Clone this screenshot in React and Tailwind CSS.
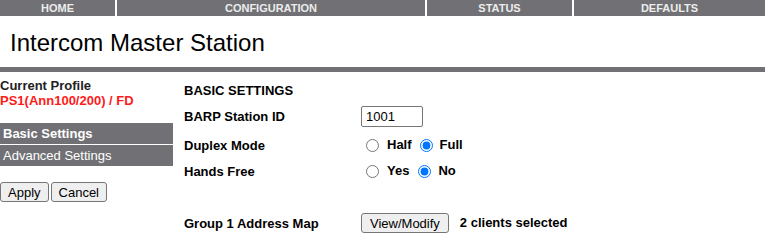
import React, { useState } from 'react';

const navItems = [
  { label: 'HOME', width: 'w-[115px]' },
  { label: 'CONFIGURATION', width: 'w-[308px]' },
  { label: 'STATUS', width: 'w-[145px]' },
  { label: 'DEFAULTS', width: 'flex-1' },
];

const App = () => {
  const [duplex, setDuplex] = useState('full');
  const [handsFree, setHandsFree] = useState('no');
  const [stationId, setStationId] = useState('1001');

  return (
    <div className="w-[765px] h-[246px] bg-white overflow-hidden font-['Liberation_Sans',Arial,sans-serif] text-black">
      {/* top navigation */}
      <div className="flex h-[16px] bg-white gap-[2px]">
        {navItems.map(item => (
          <div
            key={item.label}
            className={`${item.width} h-full flex items-center justify-center text-[11px] font-bold text-[#ececec] bg-[#717175] leading-none`}
          >
            {item.label}
          </div>
        ))}
      </div>

      {/* title */}
      <div className="h-[51px] flex items-center pl-[10px] pt-[2px]">
        <h1 className="text-[24px] leading-none">Intercom Master Station</h1>
      </div>
      <div className="h-[5px] bg-[#717175]" />

      <div className="flex">
        {/* sidebar */}
        <div className="w-[173px] pt-[6px]">
          <div className="text-[13px] font-bold leading-[15px] text-[#222]">Current Profile</div>
          <div className="text-[13px] font-bold leading-[15px] text-[#ff1a1a]">PS1(Ann100/200) / FD</div>

          <div className="mt-[15px] flex flex-col gap-px">
            <div className="h-[21px] bg-[#717175] text-white text-[13px] font-bold flex items-center pl-[3px]">
              Basic Settings
            </div>
            <div className="h-[21px] bg-[#717175] text-white text-[13px] flex items-center pl-[3px]">
              Advanced Settings
            </div>
          </div>

          <div className="mt-[16px] flex gap-[2px]">
            <button className="h-[20px] px-[7px] text-[13px] bg-[#efefef] border border-[#767676] rounded-[3px] leading-none">
              Apply
            </button>
            <button className="h-[20px] px-[7px] text-[13px] bg-[#efefef] border border-[#767676] rounded-[3px] leading-none">
              Cancel
            </button>
          </div>
        </div>

        {/* main content */}
        <div className="pl-[11px] pt-[11px] text-[13px] font-bold">
          <div className="leading-[15px]">BASIC SETTINGS</div>

          <div className="grid grid-cols-[177px_auto] mt-[8px] items-center">
            <div className="leading-[15px]">BARP Station ID</div>
            <input
              type="text"
              value={stationId}
              onChange={e => setStationId(e.target.value)}
              className="w-[62px] h-[21px] border border-[#767676] rounded-[2px] px-[4px] text-[13px] font-normal outline-none"
            />

            <div className="leading-[15px] mt-[8px]">Duplex Mode</div>
            <div className="flex items-center mt-[8px] h-[20px]">
              <input
                type="radio"
                name="duplex"
                checked={duplex === 'half'}
                onChange={() => setDuplex('half')}
                className="w-[13px] h-[13px] ml-[5px] mr-[8px]"
              />
              <span>Half</span>
              <input
                type="radio"
                name="duplex"
                checked={duplex === 'full'}
                onChange={() => setDuplex('full')}
                className="w-[13px] h-[13px] ml-[8px] mr-[7px]"
              />
              <span>Full</span>
            </div>

            <div className="leading-[15px] mt-[6px]">Hands Free</div>
            <div className="flex items-center mt-[6px] h-[20px]">
              <input
                type="radio"
                name="handsfree"
                checked={handsFree === 'yes'}
                onChange={() => setHandsFree('yes')}
                className="w-[13px] h-[13px] ml-[5px] mr-[8px]"
              />
              <span>Yes</span>
              <input
                type="radio"
                name="handsfree"
                checked={handsFree === 'no'}
                onChange={() => setHandsFree('no')}
                className="w-[13px] h-[13px] ml-[9px] mr-[7px]"
              />
              <span>No</span>
            </div>

            <div className="leading-[15px] mt-[32px]">Group 1 Address Map</div>
            <div className="flex items-center mt-[32px]">
              <button className="h-[20px] px-[8px] text-[13px] font-normal bg-[#efefef] border border-[#767676] rounded-[3px] leading-none">
                View/Modify
              </button>
              <span className="ml-[11px]">2 clients selected</span>
            </div>
          </div>
        </div>
      </div>
    </div>
  );
};

export default App;
